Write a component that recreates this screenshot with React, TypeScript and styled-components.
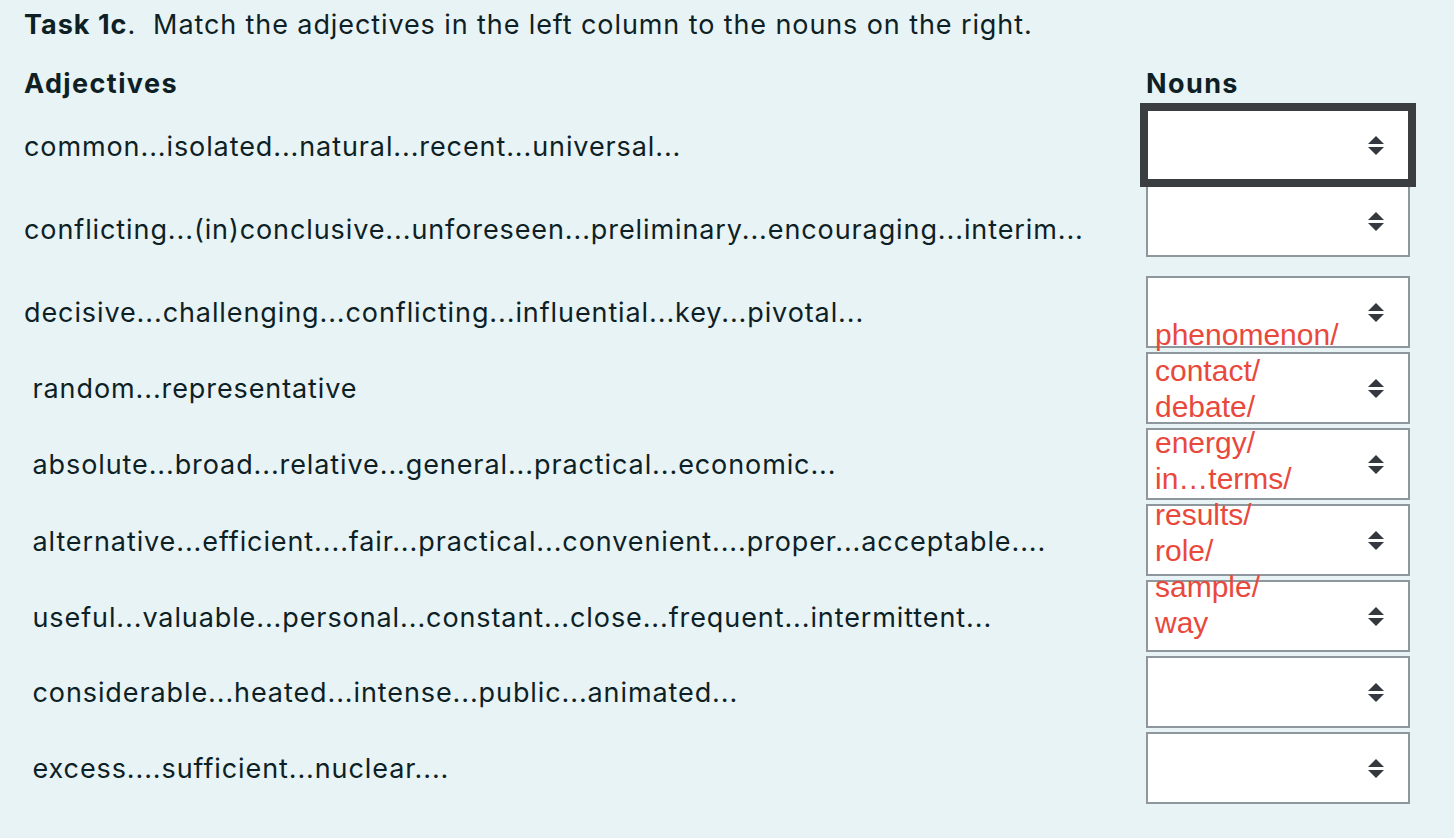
import React from "react";
import styled, { createGlobalStyle } from "styled-components";

const Global = createGlobalStyle`
  html, body { margin: 0; padding: 0; background: #e8f3f5; }
  body { font-family: Inter, "Noto Sans", sans-serif; color: #0e1f26; }
`;

const Page = styled.div`
  padding: 9px 44px 30px 24px;
  min-height: 838px;
  box-sizing: border-box;
`;

const Title = styled.div`
  font-size: 27px;
  line-height: 32px;
  letter-spacing: 0.9px;
  b { font-weight: 700; letter-spacing: 1px; }
`;

const Table = styled.div`
  position: relative;
  margin-top: 27px;
`;

const Row = styled.div<{ $gapBefore?: number }>`
  display: grid;
  grid-template-columns: 1fr 264px;
  align-items: center;
  padding: 2px 0;
  margin-top: ${(p) => p.$gapBefore ?? 0}px;
`;

const HeadRow = styled.div`
  display: grid;
  grid-template-columns: 1fr 264px;
  font-size: 27px;
  line-height: 32px;
  font-weight: 700;
  letter-spacing: 1.4px;
  margin-bottom: 7px;
`;

const Words = styled.div<{ $shift: number }>`
  font-size: 27px;
  line-height: 32px;
  letter-spacing: 0.9px;
  margin-top: ${(p) => p.$shift * 2}px;
  white-space: pre;
`;

const SelectBox = styled.div<{ $focused?: boolean }>`
  height: 72px;
  box-sizing: border-box;
  background: #ffffff;
  border: 2px solid ${(p) => (p.$focused ? "#3b3e41" : "#8f979e")};
  outline: ${(p) => (p.$focused ? "6px solid #3b3e41" : "none")};
  display: flex;
  align-items: center;
  justify-content: flex-end;
  padding-right: 24px;
  position: relative;
  z-index: ${(p) => (p.$focused ? 1 : 0)};
`;

const Overflow = styled.div`
  position: absolute;
  right: 0;
  width: 255px;
  top: 249px;
  font-family: "Liberation Sans", Arial, sans-serif;
  font-size: 30px;
  line-height: 36px;
  color: #e8493c;
  z-index: 2;
  pointer-events: none;
`;

const Arrows = () => (
  <svg width="16" height="19" viewBox="0 0 16 19">
    <path d="M8 0 L16 8 L0 8 Z" fill="#33393e" />
    <path d="M0 11 L16 11 L8 19 Z" fill="#33393e" />
  </svg>
);

const rows: { text: string; shift: number; gap?: number; focused?: boolean }[] = [
  { text: "common...isolated...natural...recent...universal...", shift: 2, focused: true },
  { text: "conflicting...(in)conclusive...unforeseen...preliminary...encouraging...interim...", shift: 9 },
  { text: "decisive...challenging...conflicting...influential...key...pivotal...", shift: 1, gap: 15 },
  { text: " random...representative", shift: 1 },
  { text: " absolute...broad...relative...general...practical...economic...", shift: 1 },
  { text: " alternative...efficient....fair...practical...convenient....proper...acceptable....", shift: 1.5 },
  { text: " useful...valuable...personal...constant...close...frequent...intermittent...", shift: 1.5 },
  { text: " considerable...heated...intense...public...animated...", shift: 1 },
  { text: " excess....sufficient...nuclear....", shift: 1 },
];

const nouns = ["phenomenon/", "contact/", "debate/", "energy/", "in\u2026terms/", "results/", "role/", "sample/", "way"];

export default function App() {
  return (
    <>
      <Global />
      <Page>
        <Title>
          <b>Task 1c</b>.&nbsp; Match the adjectives in the left column to the nouns on the right.
        </Title>
        <Table>
          <HeadRow>
            <div>Adjectives</div>
            <div>Nouns</div>
          </HeadRow>
          {rows.map((r, i) => (
            <Row key={i} $gapBefore={r.gap}>
              <Words $shift={r.shift}>{r.text}</Words>
              <SelectBox $focused={r.focused}>
                <Arrows />
              </SelectBox>
            </Row>
          ))}
          <Overflow>
            {nouns.map((n, i) => (
              <div key={i}>{n}</div>
            ))}
          </Overflow>
        </Table>
      </Page>
    </>
  );
}
